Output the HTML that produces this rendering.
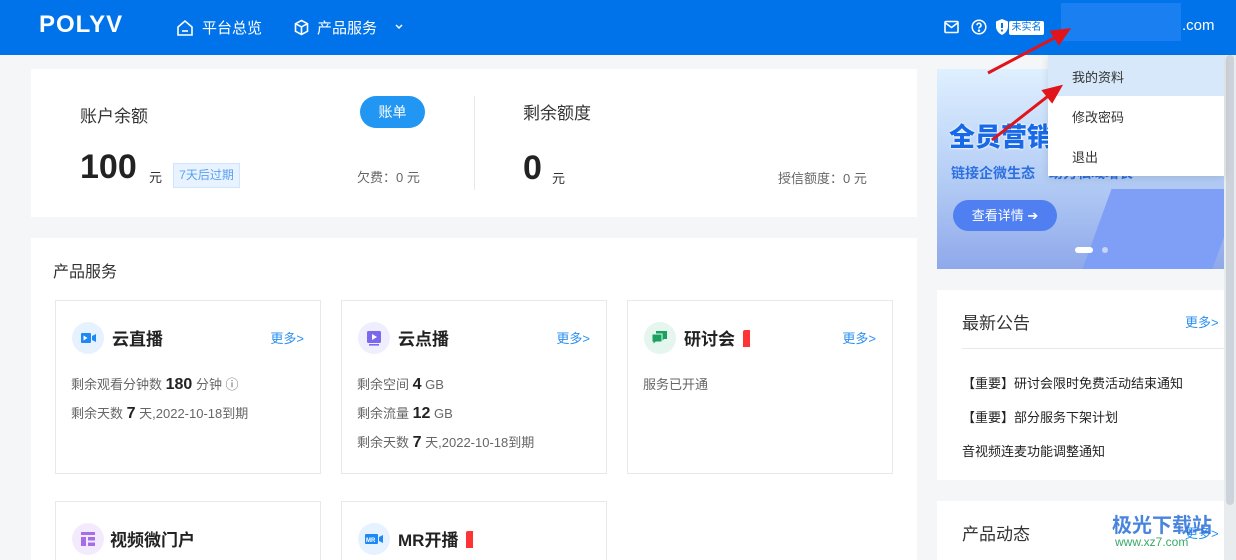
<!DOCTYPE html>
<html style="width:1236px;height:560px;overflow:hidden"><head><meta charset="utf-8"><style>
*{margin:0;padding:0;box-sizing:border-box}
body{width:1236px;height:560px;overflow:hidden;background:#f4f6f8;font-family:"Liberation Sans","Noto Sans CJK SC",sans-serif;color:#333;position:relative}
.a{position:absolute}
.hdr{left:0;top:0;width:1236px;height:55px;background:#0073ea;color:#fff}
.card{background:#fff;overflow:hidden}
.sc{background:#fff;border:1px solid #e8e8e8;width:266px;height:174px}
.sc2{border-bottom:none;height:59px;overflow:hidden}
.ic{width:32px;height:32px;border-radius:50%;left:16px;top:21px}
.tt{left:56px;top:24px;font-size:17px;font-weight:bold;color:#222}
.more{right:16px;top:27px;font-size:13px;color:#2b8ff0}
.ln{left:15px;font-size:13px;color:#666}
.ln b{font-size:16px;color:#222}
.flag{display:inline-block;width:7px;height:17px;background:#f33;border-radius:2px 0 0 0;vertical-align:-2px;margin-left:8px}
</style></head><body>
<div class="a hdr">
 <div class="a" style="left:39px;top:11px;font-size:24px;font-weight:bold;letter-spacing:1px">POLYV</div>
 <svg class="a" style="left:176px;top:19px" width="18" height="18" viewBox="0 0 18 18" fill="none" stroke="#fff" stroke-width="1.6"><path d="M2 8L9 2l7 6v8H2z"/><path d="M6 12h6"/></svg>
 <div class="a" style="left:202px;top:17px;font-size:15px">平台总览</div>
 <svg class="a" style="left:293px;top:19px" width="17" height="17" viewBox="0 0 17 17" fill="none" stroke="#fff" stroke-width="1.6"><path d="M8.5 1.5l6 3.2v7.6l-6 3.2-6-3.2V4.7z"/><path d="M2.5 4.7l6 3.2 6-3.2M8.5 8v7.5"/></svg>
 <div class="a" style="left:317px;top:17px;font-size:15px">产品服务</div>
 <svg class="a" style="left:394px;top:23px" width="10" height="8" viewBox="0 0 10 8" fill="none" stroke="#fff" stroke-width="1.5"><path d="M2 2l3 3 3-3"/></svg>
 <svg class="a" style="left:944px;top:20px" width="15" height="14" viewBox="0 0 15 14" fill="none" stroke="#fff" stroke-width="1.6"><rect x="1" y="1.5" width="13" height="11" rx="1"/><path d="M1.5 3l6 4.5 6-4.5"/></svg>
 <svg class="a" style="left:971px;top:19px" width="16" height="16" viewBox="0 0 16 16" fill="none" stroke="#fff" stroke-width="1.5"><circle cx="8" cy="8" r="6.8"/><path d="M6 6.3a2 2 0 1 1 2.8 1.8c-.6.3-.8.7-.8 1.4"/><circle cx="8" cy="11.6" r=".5" fill="#fff"/></svg>
 <svg class="a" style="left:995px;top:18px" width="14" height="18" viewBox="0 0 14 18"><path d="M7 1l6 2.5v5c0 4-3 7-6 8.5C4 15.5 1 12.5 1 8.5v-5z" fill="#fff"/><path d="M7 5v5" stroke="#0073ea" stroke-width="2"/><circle cx="7" cy="12.5" r="1.1" fill="#0073ea"/></svg>
 <div class="a" style="left:1009px;top:21px;width:35px;height:14px;background:#fff;border-radius:2px;color:#0073ea;font-size:10px;line-height:14px;text-align:center">未实名</div>
 <div class="a" style="left:1061px;top:3px;width:120px;height:38px;background:#1a7ff0"></div>
 <div class="a" style="left:1182px;top:17px;font-size:15px">.com</div>
</div>
<div class="a" style="left:1224px;top:55px;width:12px;height:505px;background:#e9ecef"></div>
<div class="a" style="left:1226px;top:55px;width:8px;height:450px;background:#cdd3da;border-radius:4px"></div>

<div class="a card" style="left:31px;top:69px;width:886px;height:148px">
 <div class="a" style="left:49px;top:33px;font-size:17px">账户余额</div>
 <div class="a" style="left:329px;top:27px;width:65px;height:32px;border-radius:16px;background:#2196f3;color:#fff;font-size:14px;line-height:32px;text-align:center">账单</div>
 <div class="a" style="left:49px;top:79px;font-size:34px;font-weight:bold;color:#222">100</div>
 <div class="a" style="left:118px;top:98px;font-size:13px">元</div>
 <div class="a" style="left:142px;top:94px;width:67px;height:25px;background:#e8f3ff;border:1px solid #cfe5ff;color:#5a9ff0;font-size:12px;line-height:23px;text-align:center">7天后过期</div>
 <div class="a" style="left:326px;top:98px;font-size:13px;color:#666">欠费：0 元</div>
 <div class="a" style="left:443px;top:27px;width:1px;height:94px;background:#e8e8e8"></div>
 <div class="a" style="left:492px;top:30px;font-size:17px">剩余额度</div>
 <div class="a" style="left:492px;top:80px;font-size:34px;font-weight:bold;color:#222">0</div>
 <div class="a" style="left:521px;top:99px;font-size:13px">元</div>
 <div class="a" style="left:747px;top:99px;font-size:13px;color:#666">授信额度：0 元</div>
</div>

<div class="a card" style="left:31px;top:238px;width:886px;height:322px">
 <div class="a" style="left:22px;top:20px;font-size:16px">产品服务</div>
 <div class="a sc" style="left:24px;top:62px">
  <div class="a ic" style="background:#e6f2ff"><svg width="32" height="32"><rect x="9" y="11" width="10" height="10" rx="1" fill="#1e88f5"/><path d="M11.5 13.5l4 2.5-4 2.5z" fill="#fff"/><path d="M20 14l4-2v8l-4-2z" fill="#1e88f5"/></svg></div>
  <div class="a tt">云直播</div><div class="a more">更多&gt;</div>
  <div class="a ln" style="top:73px">剩余观看分钟数 <b>180</b> 分钟 ⓘ</div>
  <div class="a ln" style="top:102px">剩余天数 <b>7</b> 天,2022-10-18到期</div>
 </div>
 <div class="a sc" style="left:310px;top:62px">
  <div class="a ic" style="background:#efeeff"><svg width="32" height="32"><rect x="9" y="9" width="14" height="12" rx="1.5" fill="#7b68ee"/><path d="M14 12l5 3-5 3z" fill="#fff"/><rect x="11" y="22" width="10" height="1.6" fill="#7b68ee"/></svg></div>
  <div class="a tt">云点播</div><div class="a more">更多&gt;</div>
  <div class="a ln" style="top:73px">剩余空间 <b>4</b> GB</div>
  <div class="a ln" style="top:102px">剩余流量 <b>12</b> GB</div>
  <div class="a ln" style="top:131px">剩余天数 <b>7</b> 天,2022-10-18到期</div>
 </div>
 <div class="a sc" style="left:596px;top:62px">
  <div class="a ic" style="background:#e4f6ee"><svg width="32" height="32"><path d="M12 9h11v8h-3l-2 2v-2h-6z" fill="#19a15f"/><path d="M8 12h10v8h-6l-3 2.5V20H8z" fill="#19a15f" stroke="#e4f6ee" stroke-width="1"/></svg></div>
  <div class="a tt">研讨会<span class="flag"></span></div><div class="a more">更多&gt;</div>
  <div class="a ln" style="top:73px">服务已开通</div>
 </div>
 <div class="a sc sc2" style="left:24px;top:263px">
  <div class="a ic" style="background:#f3eafd"><svg width="32" height="32"><rect x="9" y="9" width="14" height="3" fill="#a56de8"/><rect x="9" y="14" width="5" height="9" fill="#a56de8"/><rect x="16" y="14" width="7" height="3.5" fill="#a56de8"/><rect x="16" y="19.5" width="7" height="3.5" fill="#a56de8"/></svg></div>
  <div class="a tt" style="left:54px">视频微门户</div>
 </div>
 <div class="a sc sc2" style="left:310px;top:263px">
  <div class="a ic" style="background:#e6f2ff"><svg width="32" height="32"><rect x="7" y="11" width="13" height="10" rx="1" fill="#1e88f5"/><text x="8" y="19" font-size="6" fill="#fff" font-family="Liberation Sans" font-weight="bold">MR</text><path d="M21 14l4-2v8l-4-2z" fill="#1e88f5"/></svg></div>
  <div class="a tt">MR开播<span class="flag"></span></div>
 </div>
</div>

<div class="a" style="left:937px;top:69px;width:287px;height:200px;background:linear-gradient(180deg,#dff0ff 0%,#b4cdf5 55%,#8fa8ea 100%);overflow:hidden">
 <div class="a" style="left:12px;top:48px;font-size:26px;font-weight:900;color:#1769e8;text-shadow:0 0 2px #fff,0 0 2px #fff">全员营销</div>
 <div class="a" style="left:14px;top:94px;font-size:14px;font-weight:bold;color:#2c6fe0">链接企微生态　助力私域增长</div>
 <div class="a" style="left:16px;top:131px;width:104px;height:31px;border-radius:16px;background:#4f7ff0;color:#fff;font-size:13px;line-height:31px;text-align:center">查看详情 ➔</div>
 <div class="a" style="left:160px;top:120px;width:130px;height:80px;background:#7e9ff5;transform:skewX(-20deg)"></div>
 <div class="a" style="left:138px;top:178px;width:18px;height:6px;border-radius:3px;background:#fff"></div>
 <div class="a" style="left:165px;top:178px;width:6px;height:6px;border-radius:3px;background:#c7d4f5"></div>
</div>

<div class="a card" style="left:937px;top:290px;width:287px;height:190px">
 <div class="a" style="left:25px;top:19px;font-size:17px">最新公告</div>
 <div class="a" style="left:248px;top:22px;font-size:13px;color:#2b8ff0">更多&gt;</div>
 <div class="a" style="left:25px;top:58px;width:262px;height:1px;background:#e8e8e8"></div>
 <div class="a" style="left:25px;top:83px;font-size:13px;color:#222">【重要】研讨会限时免费活动结束通知</div>
 <div class="a" style="left:25px;top:117px;font-size:13px;color:#222">【重要】部分服务下架计划</div>
 <div class="a" style="left:25px;top:151px;font-size:13px;color:#222">音视频连麦功能调整通知</div>
</div>
<div class="a card" style="left:937px;top:501px;width:287px;height:59px">
 <div class="a" style="left:25px;top:19px;font-size:17px">产品动态</div>
 <div class="a" style="left:248px;top:22px;font-size:13px;color:#2b8ff0">更多&gt;</div>
 <div class="a" style="left:175px;top:8px;font-size:20px;font-weight:bold;color:#2a6fd8;opacity:.85">极光下载站</div>
 <div class="a" style="left:178px;top:34px;font-size:12px;color:#3aa86a">www.xz7.com</div>
</div>

<div class="a" style="left:1048px;top:55px;width:176px;height:121px;background:#fff;box-shadow:0 2px 8px rgba(0,0,0,.12)">
 <div class="a" style="left:0;top:0;width:176px;height:41px;background:#d6e8fa"></div>
 <div class="a" style="left:24px;top:12px;font-size:13px">我的资料</div>
 <div class="a" style="left:24px;top:52px;font-size:13px">修改密码</div>
 <div class="a" style="left:24px;top:92px;font-size:13px">退出</div>
</div>

<svg class="a" style="left:0;top:0" width="1236" height="560"><g stroke="#e0141a" stroke-width="3" fill="#e0141a"><path d="M988 73L1060 35"/><path d="M1068 30l-16 2 7 11z"/><path d="M992 140L1052 93"/><path d="M1060 87l-16 4 8 10z"/></g></svg>
</body></html>
